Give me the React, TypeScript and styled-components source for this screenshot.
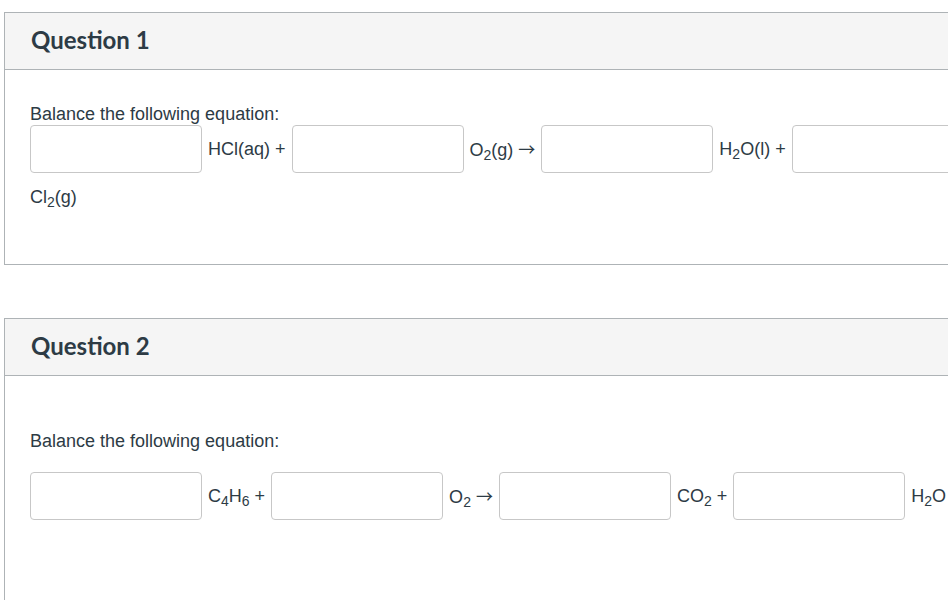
import React from "react";
import styled, { createGlobalStyle } from "styled-components";

const Global = createGlobalStyle`
  html, body { margin: 0; padding: 0; overflow: hidden; background: #fff; }
  body { font-family: "Liberation Sans", Arial, sans-serif; color: #2d3b45; }
`;

const Page = styled.div`
  padding: 12px 0 0 4px;
  width: 1100px;
`;

const Card = styled.section<{ $gap?: number }>`
  width: 1000px;
  border: 1px solid #aeb3b6;
  margin-bottom: ${(p) => p.$gap ?? 0}px;
`;

const Header = styled.header`
  height: 53px;
  background: #f5f5f5;
  border-bottom: 1px solid #aeb3b6;
  display: flex;
  align-items: center;
  padding: 0 0 3px 26px;
`;

const Title = styled.h2`
  margin: 0;
  font-family: Lato, "Liberation Sans", sans-serif;
  font-weight: 700;
  font-size: 24px;
  line-height: 28px;
  color: #2d3b45;
`;

const Body = styled.div<{ $top: number; $bottom: number }>`
  padding: ${(p) => p.$top}px 26px ${(p) => p.$bottom}px 25px;
`;

const Prompt = styled.p`
  margin: 0;
  font-size: 18px;
  line-height: 20px;
`;

const Equation = styled.div<{ $top: number }>`
  display: flex;
  flex-wrap: wrap;
  align-items: center;
  column-gap: 6px;
  row-gap: 14px;
  margin-top: ${(p) => p.$top}px;
  font-size: 18px;
  line-height: 20px;
`;

const Box = styled.input`
  box-sizing: border-box;
  width: 172px;
  height: 48px;
  border: 1px solid #c7c7c7;
  border-radius: 4px;
  background: #fff;
  margin: 0;
  padding: 0 8px;
  font: inherit;
`;

const Term = styled.span`
  white-space: nowrap;
`;

const Sub = styled.sub`
  font-size: 14px;
  vertical-align: -4px;
  line-height: 0;
`;

const Arrow = styled.span`
  font-family: "Noto Sans CJK JP", "DejaVu Sans", sans-serif;
  font-size: 17px;
`;

type Part = string | [string];

const Formula = ({ parts }: { parts: Part[] }) => (
  <>
    {parts.map((p, i) =>
      p === "→" ? (
        <Arrow key={i}>→</Arrow>
      ) : typeof p === "string" ? (
        <React.Fragment key={i}>{p}</React.Fragment>
      ) : (
        <Sub key={i}>{p[0]}</Sub>
      )
    )}
  </>
);

export default function App() {
  return (
    <>
      <Global />
      <Page>
        <Card $gap={53}>
          <Header>
            <Title>Question 1</Title>
          </Header>
          <Body $top={34} $bottom={57}>
            <Prompt>Balance the following equation:</Prompt>
            <Equation $top={1}>
              <Box aria-label="coefficient 1" />
              <Term>HCl(aq) +</Term>
              <Box aria-label="coefficient 2" />
              <Term>
                <Formula parts={["O", ["2"], "(g) ", "→"]} />
              </Term>
              <Box aria-label="coefficient 3" />
              <Term>
                <Formula parts={["H", ["2"], "O(l) +"]} />
              </Term>
              <Box aria-label="coefficient 4" />
              <Term>
                <Formula parts={["Cl", ["2"], "(g)"]} />
              </Term>
            </Equation>
          </Body>
        </Card>
        <Card>
          <Header>
            <Title>Question 2</Title>
          </Header>
          <Body $top={55} $bottom={120}>
            <Prompt>Balance the following equation:</Prompt>
            <Equation $top={21}>
              <Box aria-label="coefficient 1" />
              <Term>
                <Formula parts={["C", ["4"], "H", ["6"], " +"]} />
              </Term>
              <Box aria-label="coefficient 2" />
              <Term>
                <Formula parts={["O", ["2"], " ", "→"]} />
              </Term>
              <Box aria-label="coefficient 3" />
              <Term>
                <Formula parts={["CO", ["2"], " +"]} />
              </Term>
              <Box aria-label="coefficient 4" />
              <Term>
                <Formula parts={["H", ["2"], "O"]} />
              </Term>
            </Equation>
          </Body>
        </Card>
      </Page>
    </>
  );
}
